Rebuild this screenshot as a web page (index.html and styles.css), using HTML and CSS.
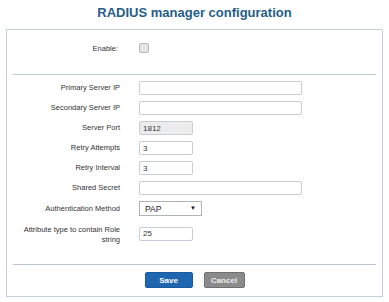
FILE: index.html
```html
<!DOCTYPE html>
<html lang="en">
<head>
    <meta charset="UTF-8">
    <meta name="viewport" content="width=device-width, initial-scale=1.0">
    <title>RADIUS manager configuration</title>
    <link rel="stylesheet" href="styles.css">
</head>
<body>
    <h1 class="page-title">RADIUS manager configuration</h1>

    <div class="panel">
        <div class="enable-row">
            <label for="enable">Enable:</label>
            <input type="checkbox" id="enable" class="check">
        </div>

        <hr class="divider">

        <form class="form-grid">
            <label for="primaryIp">Primary Server IP</label>
            <input type="text" id="primaryIp" class="field field-wide">

            <label for="secondaryIp">Secondary Server IP</label>
            <input type="text" id="secondaryIp" class="field field-wide">

            <label for="port">Server Port</label>
            <input type="text" id="port" class="field field-short field-disabled" value="1812" readonly>

            <label for="attempts">Retry Attempts</label>
            <input type="text" id="attempts" class="field field-short" value="3">

            <label for="interval">Retry Interval</label>
            <input type="text" id="interval" class="field field-short" value="3">

            <label for="secret">Shared Secret</label>
            <input type="text" id="secret" class="field field-wide">

            <label for="method">Authentication Method</label>
            <div class="select-wrap">
                <select id="method" class="select">
                    <option>PAP</option>
                    <option>CHAP</option>
                </select>
                <span class="select-arrow">&#9660;</span>
            </div>

            <label for="roleAttr" class="label-multi">Attribute type to contain Role string</label>
            <input type="text" id="roleAttr" class="field field-short" value="25">
        </form>

        <hr class="divider divider-bottom">

        <div class="button-group">
            <button type="button" class="btn btn-save">Save</button>
            <button type="button" class="btn btn-cancel">Cancel</button>
        </div>
    </div>
</body>
</html>
```

FILE: styles.css
```css
:root {
    --title-color: #255d89;
    --border-color: #c6ced9;
    --label-color: #333333;
}

body {
    margin: 0;
    background-color: white;
    font-family: 'Liberation Sans', Arial, sans-serif;
    color: var(--label-color);
}

.page-title {
    margin: 0;
    height: 25px;
    padding-bottom: 4px;
    line-height: 25px;
    font-size: 13px;
    font-weight: bold;
    text-align: center;
    color: var(--title-color);
}

.panel {
    margin: 0 6px;
    height: 266px;
    padding: 0 6px;
    border: 1px solid var(--border-color);
}

.enable-row {
    display: grid;
    grid-template-columns: 107px auto;
    column-gap: 19px;
    align-items: center;
    margin-top: 13px;
    height: 10px;
    font-size: 7.5px;
}

.enable-row label {
    text-align: right;
    padding-right: 2px;
}

.check {
    appearance: none;
    width: 10px;
    height: 10px;
    margin: 0;
    border: 1px solid #b4b4b4;
    border-radius: 2px;
    background-color: #e6e6e6;
}

.divider {
    margin: 21px 0 0;
    border: none;
    height: 1px;
    background-color: #bcc7d2;
}

.form-grid {
    display: grid;
    grid-template-columns: 107px auto;
    column-gap: 19px;
    row-gap: 6px;
    align-items: center;
    margin: 6px 0 0;
    font-size: 7.5px;
}

.form-grid label {
    text-align: right;
    line-height: 10px;
}

.form-grid .label-multi {
    align-self: start;
    padding-top: 3px;
}

.field {
    box-sizing: border-box;
    height: 14px;
    margin: 0;
    padding: 0 3px;
    border: 1px solid #c9cdd3;
    border-radius: 2px;
    font-family: 'Liberation Sans', Arial, sans-serif;
    font-size: 8px;
    color: #333;
    background-color: white;
}

.field-wide {
    width: 163px;
}

.field-short {
    width: 54px;
}

.field-disabled {
    background-color: #ececec;
}

.select-wrap {
    position: relative;
    width: 63px;
    height: 15px;
}

.select {
    appearance: none;
    box-sizing: border-box;
    width: 63px;
    height: 15px;
    margin: 0;
    padding: 0 5px;
    border: 1px solid #b0b3b8;
    border-radius: 0;
    background-color: white;
    font-family: 'Liberation Sans', Arial, sans-serif;
    font-size: 8.5px;
    color: #222;
}

.select-arrow {
    position: absolute;
    right: 6px;
    top: 4px;
    font-size: 6px;
    line-height: 7px;
    color: #111;
    pointer-events: none;
}

.divider-bottom {
    margin-top: 19px;
}

.button-group {
    display: flex;
    gap: 11px;
    justify-content: center;
    margin-top: 7px;
}

.btn {
    height: 16px;
    padding: 0;
    border-radius: 2px;
    font-family: 'Liberation Sans', Arial, sans-serif;
    font-size: 8px;
    font-weight: bold;
    color: white;
    cursor: pointer;
}

.btn-save {
    width: 48px;
    border: 1px solid #1a5a9c;
    background-color: #1f66b0;
}

.btn-cancel {
    width: 41px;
    border: 1px solid #707070;
    background-color: #8b8b8b;
    color: #eeeeee;
}
```
